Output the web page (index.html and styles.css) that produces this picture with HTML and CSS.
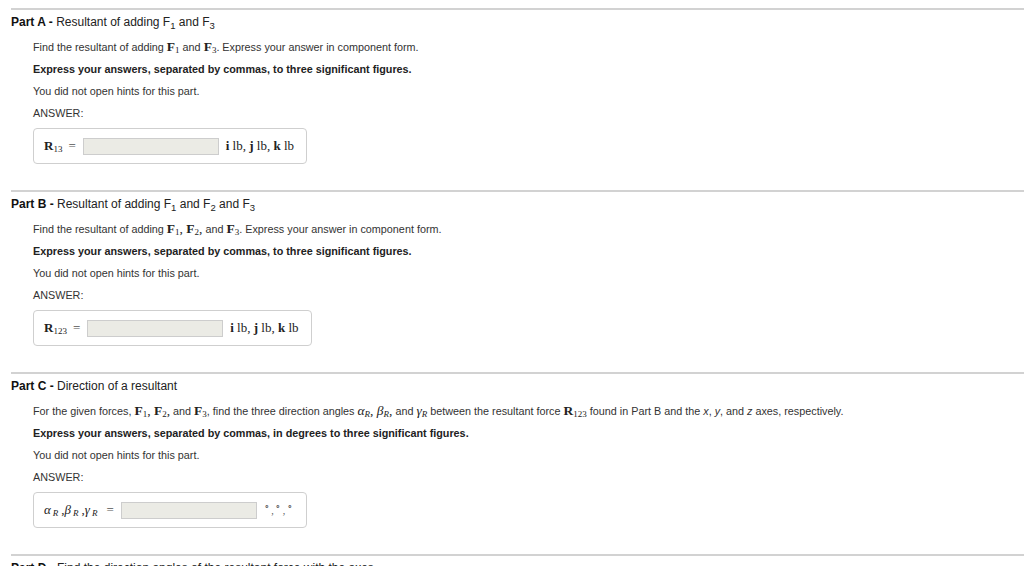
FILE: index.html
```html
<!DOCTYPE html>
<html lang="en">
<head>
  <meta charset="UTF-8" />
  <title>Parts</title>
  <link rel="stylesheet" href="styles.css">
</head>
<body>

  <div class="part">
    <h2><strong>Part A -</strong> Resultant of adding F<sub>1</sub> and F<sub>3</sub></h2>
    <div class="body">
      <p>Find the resultant of adding <span class="m"><b>F</b><sub>1</sub></span> and <span class="m"><b>F</b><sub>3</sub></span>. Express your answer in component form.</p>
      <p class="strong">Express your answers, separated by commas, to three significant figures.</p>
      <p>You did not open hints for this part.</p>
      <p>ANSWER:</p>
      <div class="answer">
        <span class="m label"><b>R</b><sub>13</sub><span class="eq">=</span></span>
        <span class="input"></span>
        <span class="m units"><b>i</b> lb, <b>j</b> lb, <b>k</b> lb</span>
      </div>
    </div>
  </div>

  <div class="part">
    <h2><strong>Part B -</strong> Resultant of adding F<sub>1</sub> and F<sub>2</sub> and F<sub>3</sub></h2>
    <div class="body">
      <p>Find the resultant of adding <span class="m"><b>F</b><sub>1</sub>, <b>F</b><sub>2</sub>,</span> and <span class="m"><b>F</b><sub>3</sub></span>. Express your answer in component form.</p>
      <p class="strong">Express your answers, separated by commas, to three significant figures.</p>
      <p>You did not open hints for this part.</p>
      <p>ANSWER:</p>
      <div class="answer">
        <span class="m label"><b>R</b><sub>123</sub><span class="eq">=</span></span>
        <span class="input"></span>
        <span class="m units"><b>i</b> lb, <b>j</b> lb, <b>k</b> lb</span>
      </div>
    </div>
  </div>

  <div class="part">
    <h2><strong>Part C -</strong> Direction of a resultant</h2>
    <div class="body">
      <p>For the given forces, <span class="m"><b>F</b><sub>1</sub>, <b>F</b><sub>2</sub>,</span> and <span class="m"><b>F</b><sub>3</sub></span>, find the three direction angles <span class="m"><i>α<sub>R</sub></i>, <i>β<sub>R</sub></i>,</span> and <span class="m"><i>γ<sub>R</sub></i></span> between the resultant force <span class="m"><b>R</b><sub>123</sub></span> found in Part B and the <i>x</i>, <i>y</i>, and <i>z</i> axes, respectively.</p>
      <p class="strong">Express your answers, separated by commas, in degrees to three significant figures.</p>
      <p>You did not open hints for this part.</p>
      <p>ANSWER:</p>
      <div class="answer">
        <span class="m label greek"><i>α<sub>R</sub></i>,<i>β<sub>R</sub></i>,<i>γ<sub>R</sub></i><span class="eq">=</span></span>
        <span class="input"></span>
        <span class="m units deg"><sup>∘</sup>,<sup>∘</sup>,<sup>∘</sup></span>
      </div>
    </div>
  </div>

  <div class="part">
    <h2><strong>Part D -</strong> Find the direction angles of the resultant force with the axes</h2>
  </div>

</body>
</html>
```

FILE: styles.css
```css
body {
  font-family: "Liberation Sans", Arial, sans-serif;
  color: #333;
  margin: 0;
  padding: 8px 0 0 11px;
  overflow: hidden;
}
.part {
  border-top: 2px solid #d2d2d2;
  height: 180px;
}
h2 {
  font-size: 12px;
  font-weight: normal;
  line-height: 16px;
  margin: 4px 0 0 0;
  color: #222;
}
h2 strong {
  color: #111;
}
h2 sub {
  font-size: 9.5px;
  vertical-align: -3px;
  line-height: 0;
}
.body {
  padding-left: 22px;
  margin-top: 6px;
}
p {
  font-size: 10.8px;
  line-height: 22px;
  margin: 0;
}
.strong {
  font-weight: bold;
  color: #222;
}
.m {
  font-family: "Liberation Serif", "Times New Roman", serif;
  font-size: 13.5px;
  color: #222;
}
.m sub {
  font-size: 9px;
  vertical-align: -2px;
  line-height: 0;
}
.answer {
  display: inline-flex;
  align-items: center;
  gap: 7px;
  height: 34px;
  margin-top: 4px;
  padding: 0 12px 0 10px;
  border: 1px solid #cfcfcf;
  border-radius: 4px;
}
.answer .m {
  font-size: 13px;
}
.label {
  white-space: nowrap;
}
.eq {
  color: #555;
  margin-left: 6px;
}
.greek i {
  margin-right: 3px;
}
.greek sub {
  margin-left: 2px;
}
.input {
  display: block;
  width: 134px;
  height: 15px;
  background: #ebebe5;
  border: 1px solid #cdcdcd;
}
.units {
  white-space: nowrap;
}
.answer .deg {
  font-size: 10px;
  letter-spacing: 1.5px;
  color: #555;
}
.deg sup {
  font-size: 9px;
  vertical-align: 4px;
  line-height: 0;
}
```
